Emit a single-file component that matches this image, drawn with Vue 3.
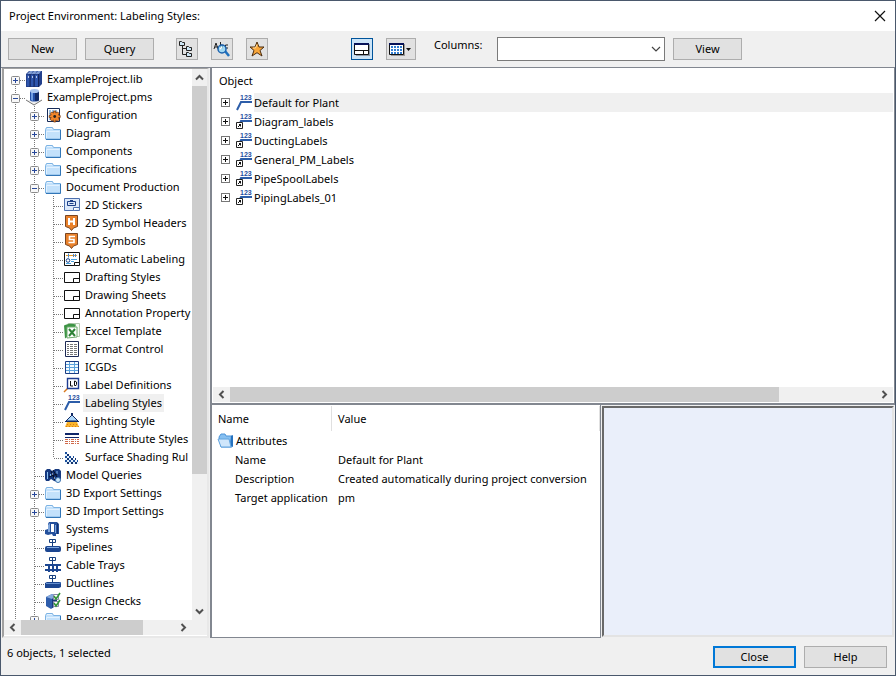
<script setup>
import { ref } from 'vue'

const treeRows = [
  { label: 'ExampleProject.lib', icon: 'lib', box: '+', guides: ['first'] },
  { label: 'ExampleProject.pms', icon: 'pms', box: '-', guides: ['tee'] },
  { label: 'Configuration', icon: 'config', box: '+', guides: ['line', 'tee'] },
  { label: 'Diagram', icon: 'folder', box: '+', guides: ['line', 'tee'] },
  { label: 'Components', icon: 'folder', box: '+', guides: ['line', 'tee'] },
  { label: 'Specifications', icon: 'folder', box: '+', guides: ['line', 'tee'] },
  { label: 'Document Production', icon: 'folder', box: '-', guides: ['line', 'tee'] },
  { label: '2D Stickers', icon: 'sticker', guides: ['line', 'line', 'tee'] },
  { label: '2D Symbol Headers', icon: 'shield-h', guides: ['line', 'line', 'tee'] },
  { label: '2D Symbols', icon: 'shield-s', guides: ['line', 'line', 'tee'] },
  { label: 'Automatic Labeling', icon: 'auto', guides: ['line', 'line', 'tee'] },
  { label: 'Drafting Styles', icon: 'sheet', guides: ['line', 'line', 'tee'] },
  { label: 'Drawing Sheets', icon: 'sheet', guides: ['line', 'line', 'tee'] },
  { label: 'Annotation Property', icon: 'sheet', guides: ['line', 'line', 'tee'] },
  { label: 'Excel Template', icon: 'excel', guides: ['line', 'line', 'tee'] },
  { label: 'Format Control', icon: 'format', guides: ['line', 'line', 'tee'] },
  { label: 'ICGDs', icon: 'grid', guides: ['line', 'line', 'tee'] },
  { label: 'Label Definitions', icon: 'labeldef', guides: ['line', 'line', 'tee'] },
  { label: 'Labeling Styles', icon: 'label', guides: ['line', 'line', 'tee'], selected: true },
  { label: 'Lighting Style', icon: 'light', guides: ['line', 'line', 'tee'] },
  { label: 'Line Attribute Styles', icon: 'lines', guides: ['line', 'line', 'tee'] },
  { label: 'Surface Shading Rul', icon: 'shading', guides: ['line', 'line', 'end'] },
  { label: 'Model Queries', icon: 'queries', guides: ['line', 'tee'] },
  { label: '3D Export Settings', icon: 'folder', box: '+', guides: ['line', 'tee'] },
  { label: '3D Import Settings', icon: 'folder', box: '+', guides: ['line', 'tee'] },
  { label: 'Systems', icon: 'systems', guides: ['line', 'tee'] },
  { label: 'Pipelines', icon: 'pipe', guides: ['line', 'tee'] },
  { label: 'Cable Trays', icon: 'tray', guides: ['line', 'tee'] },
  { label: 'Ductlines', icon: 'duct', guides: ['line', 'tee'] },
  { label: 'Design Checks', icon: 'checks', guides: ['line', 'tee'] },
  { label: 'Resources', icon: 'folder', box: '+', guides: ['line', 'tee'] }
]

const objects = [
  'Default for Plant',
  'Diagram_labels',
  'DuctingLabels',
  'General_PM_Labels',
  'PipeSpoolLabels',
  'PipingLabels_01'
]
const selected = ref(0)

const attributes = [
  ['Name', 'Default for Plant'],
  ['Description', 'Created automatically during project conversion'],
  ['Target application', 'pm']
]

const scroll = { treeY: 75, treeX: 79, listX: 85 }
const columns = ref('')
</script>

<template>
  <svg class="defs" aria-hidden="true">
    <symbol id="lib" viewBox="0 0 19 18">
      <path d="M1 4l3-3h13v13l-3 3H1z" fill="#23408c" />
      <path d="M2 4l3-3h3L6 4zM6 4l3-3h3l-2 3zM10 4l3-3h3l-2 3z" fill="#7f9bd2" />
      <path d="M2 5h3v11H2zM6 5h3v11H6zM10 5h3v11h-3z" fill="#2f56ad" />
      <path d="M5 4v13M9 4v13M13.500 4v13" stroke="#14265e" />
      <path d="M3 7h1M7 7h1M11 7h1" stroke="#b9c9ee" stroke-width="2" />
    </symbol>
    <symbol id="pms" viewBox="0 0 19 18">
      <path d="M1 12l8 5 8-5" fill="#eee" stroke="#777" />
      <path d="M5 3v9c0 2 9 2 9 0V3z" fill="#2450a8" />
      <path d="M10 3v10c2 0 4 0 4-1V3z" fill="#102a68" />
      <path d="M6 3v9l2 1V3z" fill="#6f9de2" />
      <ellipse cx="9.500" cy="3" rx="4.500" ry="2" fill="#a9c5ef" />
    </symbol>
    <symbol id="config" viewBox="0 0 19 18">
      <path d="M3.500 2.500h12v13h-12z" fill="#fff" stroke="#152a57" />
      <path d="M5 5h9M5 7h9M5 9h9M5 11h9M5 13h9" stroke="#3b82c4" stroke-dasharray="2 1" />
      <path d="M9.700 5h2v2l2-1 1.500 1.500-1 1.500 2 .5v2h-2l1 2-1.500 1.500-2-1v2h-2v-2l-2 1L6.200 13l1-1.500h-2v-2l2-.5-1-1.500L7.700 6l2 1z" fill="#f2872c" stroke="#6a3008" stroke-width=".7" />
      <circle cx="10.700" cy="10.500" r="1.400" fill="#222" />
    </symbol>
    <symbol id="folder" viewBox="0 0 19 18">
      <path d="M1.500 5.500l1-2h6l1 2h7v9.500h-15z" fill="#c3e1fb" stroke="#7db3e3" />
      <path d="M3 4.500h5" stroke="#e7f4ff" />
      <path d="M2.500 14V7.500h13" fill="none" stroke="#e2f1ff" />
      <path d="M2 15.500h14.500V6" fill="none" stroke="#3276b7" />
    </symbol>
    <symbol id="folder-open" viewBox="0 0 19 18">
      <path d="M2 5l2-3h4l1 2h6v11H4z" fill="#86bff0" stroke="#4d94d8" />
      <path d="M14 4l2-1v12l-3-2z" fill="#2471bf" />
      <path d="M1 7h11l2 8H4z" fill="#cfe6fb" stroke="#62a4df" />
    </symbol>
    <symbol id="sticker" viewBox="0 0 19 18">
      <path d="M1.500 2.500h15v12h-15z" fill="#dce9fa" stroke="#4d70ae" />
      <path d="M4.500 5.500h8v4h-8zM6.500 7.500h4" fill="none" stroke="#1b3e87" />
      <path d="M7 4.500h3" stroke="#1b3e87" />
      <path d="M10.500 14.500v-3h6" fill="#fff" stroke="#4d70ae" />
    </symbol>
    <symbol id="shield-h" viewBox="0 0 19 18">
      <path d="M2.500 1.500h12v11l-4 1.500-2 2.500-2-2.500-4-1.500z" fill="#e9812a" stroke="#7b4520" />
      <path d="M6 4v7M11 4v7M6 7.500h5" stroke="#fff" stroke-width="2" />
    </symbol>
    <symbol id="shield-s" viewBox="0 0 19 18">
      <path d="M2.500 1.500h12v11l-4 1.500-2 2.500-2-2.500-4-1.500z" fill="#e9812a" stroke="#7b4520" />
      <path d="M12 4.500H6.500v3H11v3H5.500" fill="none" stroke="#fff" stroke-width="1.600" />
    </symbol>
    <symbol id="auto" viewBox="0 0 19 18">
      <path d="M1.500 2.500h15v13h-15z" fill="#fff" stroke="#111" />
      <path d="M3 5.500h11" stroke="#e79a24" />
      <path d="M5.500 3.500v4M10.500 4v3M12.500 4v3" fill="none" stroke="#4a86c8" />
      <circle cx="5" cy="10.500" r="1.800" fill="none" stroke="#17458e" />
      <path d="M8 9.500h6M8 11.500h3M3 13.500h5" stroke="#47a1dc" />
      <path d="M11.500 15.500v-3h5" fill="#fff" stroke="#111" />
    </symbol>
    <symbol id="sheet" viewBox="0 0 19 18">
      <path d="M1.500 4.500h15v10h-15z" fill="#fff" stroke="#111" />
      <path d="M10.500 14.500v-4h6" fill="none" stroke="#111" />
    </symbol>
    <symbol id="excel" viewBox="0 0 19 18">
      <path d="M5 1.500h11.500v13H5z" fill="#f5fbf3" stroke="#b4c9b0" />
      <path d="M1 3.500c4-2 8-2 12-1l-1 3-6 1v7l-4 3z" fill="#3d9445" />
      <path d="M4 5h10v10l-10 1z" fill="#fff" stroke="#6fac6e" />
      <path d="M6 7l6 7M12 7l-6 7" stroke="#2d8136" stroke-width="2" />
    </symbol>
    <symbol id="format" viewBox="0 0 19 18">
      <path d="M2.500 1.500h13v15h-13z" fill="#fff" stroke="#1c2954" />
      <path d="M4 4.500h10M4 6.500h10M4 8.500h10M4 10.500h10M4 12.500h10M4 14.500h10" stroke="#777" stroke-dasharray="2 1 3 1 3" />
    </symbol>
    <symbol id="grid" viewBox="0 0 19 18">
      <path d="M3 4h13v12H3z" fill="#56657f" />
      <path d="M2.500 3.500h13v12h-13z" fill="#f4fbff" stroke="#1a3c83" />
      <path d="M3 6.500h12M3 9.500h12M3 12.500h12M6.500 4v11M11.500 4v11" stroke="#5ca2dc" />
    </symbol>
    <symbol id="labeldef" viewBox="0 0 19 18">
      <path d="M1 16l4-4" stroke="#d9781c" stroke-width="1.500" />
      <path d="M4.500 2.500h11v10h-11z" fill="#fff" stroke="#1d3c91" stroke-width="1.400" />
      <path d="M7.500 5v5H10M11.500 5v4.500H13l.5-1V6l-.5-.5z" fill="none" stroke="#111" />
    </symbol>
    <symbol id="label" viewBox="0 0 19 18">
      <path d="M17 8H6L2 16" fill="none" stroke="#2c5da9" stroke-width="2" />
    </symbol>
    <symbol id="label-link" viewBox="0 0 19 18">
      <path d="M17 8H6L4 12" fill="none" stroke="#2c5da9" stroke-width="2" />
      <path d="M1.500 9.500h6v6h-6z" fill="#fff" stroke="#222" />
      <path d="M3 14l3-3M4 11.500h1.500v2" fill="none" stroke="#111" />
    </symbol>
    <symbol id="light" viewBox="0 0 19 18">
      <path d="M9 1v2" stroke="#122b66" stroke-width="2" />
      <path d="M9 3l6 6H3z" fill="#aed7f8" stroke="#122b66" />
      <path d="M2 9.500h14" stroke="#122b66" />
      <path d="M4 10h10l2 5H2z" fill="#f9b42c" />
      <path d="M4 12.500h10M3 14.500h13" stroke="#db7c1a" stroke-dasharray="1 2" />
    </symbol>
    <symbol id="lines" viewBox="0 0 19 18">
      <path d="M2 4h14" stroke="#102669" stroke-width="2" />
      <path d="M2 7.500h14" stroke="#102669" />
      <path d="M2 9.500h14M2 11.500h14M2 13.500h14" stroke="#d0694a" stroke-dasharray="3 1 1 1" />
    </symbol>
    <symbol id="shading" viewBox="0 0 19 18">
      <path d="M2 4l15 12H2z" fill="#e5f2fb" />
      <path d="M2 5h4M2 9h9M2 13h13" stroke="#1a4f9e" stroke-width="2" stroke-dasharray="2 2" />
      <path d="M4 7h4M4 11h9M4 15h12" stroke="#12326f" stroke-width="2" stroke-dasharray="2 2" />
    </symbol>
    <symbol id="queries" viewBox="0 0 19 18">
      <path d="M1 5l2-2h3l2 2 2-1 1-1h4l2 2v8l-3 3-4-1-3-2-2 2H2l-1-2z" fill="#16397f" />
      <path d="M3.500 6v7M6.500 8v3M13 5v3" stroke="#8ec3f2" />
      <path d="M7 5l4 9M5 11l8-3M9 4l4 7" stroke="#050d22" />
      <path d="M8 8h1M10 12h1" stroke="#fff" />
      <circle cx="14" cy="14" r="2.500" fill="#cdeafd" stroke="#3b70ad" />
    </symbol>
    <symbol id="systems" viewBox="0 0 19 18">
      <path d="M5 2h8l2 2v10h-3v2H9l-1-2-4 1-3-1v-4l3-1V4z" fill="#24509c" />
      <path d="M7 4h3v8H7z" fill="#fff" />
      <path d="M4 5l2-2v9H4zM11 5h1v8h-1z" fill="#83a8dc" />
      <path d="M13.500 3v11" stroke="#14316e" />
    </symbol>
    <symbol id="pipe" viewBox="0 0 19 18">
      <path d="M5.500 1.500h6v3h-6zM8.500 2v6" fill="#fff" stroke="#17407f" />
      <rect x="1" y="8" width="16" height="6" rx="2" fill="#1c4691" />
      <path d="M3 9.500h12" stroke="#7ea8df" />
    </symbol>
    <symbol id="tray" viewBox="0 0 19 18">
      <path d="M5.500 1.500h6v3h-6zM8.500 2v6" fill="#fff" stroke="#17407f" />
      <path d="M1 9h16M1 14h16M5 8v8M9 8v8M13 8v8" stroke="#1c4691" stroke-width="2" />
    </symbol>
    <symbol id="duct" viewBox="0 0 19 18">
      <path d="M5.500 1.500h6v3h-6zM8.500 2v6" fill="#fff" stroke="#17407f" />
      <path d="M1 9l2-1h14v5l-2 1H1z" fill="#1c4691" />
      <path d="M2 9.500h13l2-1" fill="none" stroke="#6590cf" />
    </symbol>
    <symbol id="checks" viewBox="0 0 19 18">
      <path d="M2 5l6-3 5 2v9l-6 4-5-3z" fill="#2e5dab" />
      <path d="M2 5l6-3 5 2-5 3z" fill="#86a9dd" />
      <path d="M8 7v9l5-3V4z" fill="#163b7d" />
      <path d="M9.500 2.500h5v5h-5zM9.500 9.500h5v5h-5z" fill="#fff" stroke="#88a" />
      <path d="M10 4l2 3 4-6M10 11l2 3 4-6" fill="none" stroke="#319436" stroke-width="1.600" />
    </symbol>
  </svg>

  <main class="window">
    <header class="titlebar">
      <h1>Project Environment: Labeling Styles:</h1>
      <button class="close-x" aria-label="Close window">
        <svg width="12" height="12" viewBox="0 0 12 12"><path d="M1 1l10 10M11 1L1 11" stroke="#111" stroke-width="1.200" /></svg>
      </button>
    </header>

    <div class="toolbar">
      <div class="group actions">
        <button class="btn">New</button>
        <button class="btn">Query</button>
      </div>
      <div class="group tools">
        <button class="tool" aria-label="Tree view">
          <svg width="16" height="18" viewBox="0 0 16 18">
            <path d="M3.500 5v9.500H8M3.500 8.500H8" fill="none" stroke="#222" />
            <path d="M.5 1.500h2l1 1h2v3h-5zM7.500 6.500h2l1 1h2v3h-5zM7.500 12.500h2l1 1h2v3h-5z" fill="#cde6f5" stroke="#222" />
          </svg>
        </button>
        <button class="tool" aria-label="Find text">
          <svg width="18" height="18" viewBox="0 0 18 18">
            <path d="M1 9l2-6 2 6M2 7h3M7.500 2v6M7.500 5h2v3h-2M15 5h-2.500v3H15" fill="none" stroke="#222" />
            <path d="M12 11l4 5" stroke="#1d70be" stroke-width="2.500" />
            <circle cx="9" cy="9" r="4" fill="#8bd6f8" fill-opacity=".75" stroke="#1c62ae" stroke-width="1.500" />
            <path d="M7 9l2-2" stroke="#fff" stroke-width="1.500" />
          </svg>
        </button>
        <button class="tool" aria-label="Favorites">
          <svg width="16" height="16" viewBox="0 0 16 16"><path d="M8 1l2 5h5l-4 3.500 2 5.500-5-3.300L3 15l2-5.500L1 6h5z" fill="#f8a63a" stroke="#4b2d10" /><path d="M8 3.500L6.500 7H4" fill="none" stroke="#ffdc9c" /></svg>
        </button>
      </div>
      <div class="group views">
        <button class="tool active" aria-label="Split view" aria-pressed="true">
          <svg width="16" height="14" viewBox="0 0 16 14"><path d="M2 2h14v12H2z" fill="#8d99a8" /><path d="M.5 1.500h14v11H.5z" fill="#fff" stroke="#111" /><path d="M0 2h15" stroke="#071258" stroke-width="2" /><path d="M1 8.500h13M9.500 9v3" stroke="#111" /></svg>
        </button>
        <button class="tool wide" aria-label="Table view">
          <svg width="24" height="14" viewBox="0 0 24 14"><path d="M2 2h14v12H2z" fill="#999" /><path d="M.5 1.500h14v11H.5z" fill="#fff" stroke="#111" /><path d="M0 2h15" stroke="#071258" stroke-width="2" /><path d="M2 5h11M2 8h11M2 11h11" stroke="#327fd2" stroke-width="2" stroke-dasharray="2 1" /><path d="M17 6h5l-2.500 3z" fill="#111" /></svg>
        </button>
      </div>
      <label class="columns-label" for="columns">Columns:</label>
      <div class="combo">
        <select id="columns" v-model="columns"><option value=""></option></select>
        <svg width="10" height="6" viewBox="0 0 10 6"><path d="M1 1l4 4 4-4" fill="none" stroke="#444" stroke-width="1.200" /></svg>
      </div>
      <button class="btn">View</button>
    </div>

    <div class="workspace">
      <nav class="tree-pane" aria-label="Project tree">
        <div class="tree-row-area">
          <ul class="tree">
            <li v-for="(row, i) in treeRows" :key="i" class="tree-row">
              <span v-for="(g, n) in row.guides" :key="n" class="guide" :class="g">
                <svg v-if="row.box && n === row.guides.length - 1" class="box" width="9" height="9" viewBox="0 0 9 9">
                  <rect x=".5" y=".5" width="8" height="8" rx="1" fill="#f8f8f8" stroke="#8b8b8b" />
                  <path :d="row.box === '+' ? 'M2 4.500h5M4.500 2v5' : 'M2 4.500h5'" stroke="#28489a" />
                </svg>
              </span>
              <svg class="icon" width="19" height="18">
                <use :href="'#' + row.icon" />
                <text v-if="row.icon === 'label'" x="5" y="6" class="digits">123</text>
              </svg>
              <a href="#" class="tree-label" :class="{ selected: row.selected }" @click.prevent>{{ row.label }}</a>
            </li>
          </ul>
          <div class="scrollbar vertical">
            <button aria-label="Scroll up"><svg width="9" height="7" viewBox="0 0 9 7"><path d="M1 5.500l3.500-3.500L8 5.500" /></svg></button>
            <div class="track"><div class="thumb" :style="{ height: scroll.treeY + '%' }"></div></div>
            <button aria-label="Scroll down"><svg width="9" height="7" viewBox="0 0 9 7"><path d="M1 1.500l3.500 3.500L8 1.500" /></svg></button>
          </div>
        </div>
        <div class="scrollbar horizontal with-corner">
          <button aria-label="Scroll left"><svg width="7" height="9" viewBox="0 0 7 9"><path d="M5.500 1L2 4.500 5.500 8" /></svg></button>
          <div class="track"><div class="thumb" :style="{ width: scroll.treeX + '%' }"></div></div>
          <button aria-label="Scroll right"><svg width="7" height="9" viewBox="0 0 7 9"><path d="M1.500 1L5 4.500 1.500 8" /></svg></button>
        </div>
      </nav>

      <div class="content">
        <section class="objects">
          <h2>Object</h2>
          <ul>
            <li v-for="(name, i) in objects" :key="name" class="object" @click="selected = i">
              <svg class="box" width="9" height="9" viewBox="0 0 9 9">
                <rect x=".5" y=".5" width="8" height="8" fill="#fff" stroke="#777" />
                <path d="M2 4.500h5M4.500 2v5" stroke="#111" />
              </svg>
              <svg class="icon" width="19" height="18">
                <use :href="i ? '#label-link' : '#label'" />
                <text x="5" y="6" class="digits">123</text>
              </svg>
              <span class="object-name" :class="{ selected: i === selected }">{{ name }}</span>
            </li>
          </ul>
          <div class="scrollbar horizontal">
            <button aria-label="Scroll left"><svg width="7" height="9" viewBox="0 0 7 9"><path d="M5.500 1L2 4.500 5.500 8" /></svg></button>
            <div class="track"><div class="thumb" :style="{ width: scroll.listX + '%' }"></div></div>
            <button aria-label="Scroll right"><svg width="7" height="9" viewBox="0 0 7 9"><path d="M1.500 1L5 4.500 1.500 8" /></svg></button>
          </div>
        </section>

        <div class="lower">
          <section class="details">
            <table>
              <thead>
                <tr><th class="name-col">Name</th><th>Value</th></tr>
              </thead>
              <tbody>
                <tr>
                  <td colspan="2" class="category">
                    <span><svg class="icon" width="19" height="18"><use href="#folder-open" /></svg>Attributes</span>
                  </td>
                </tr>
                <tr v-for="[key, value] in attributes" :key="key">
                  <td class="key">{{ key }}</td>
                  <td>{{ value }}</td>
                </tr>
              </tbody>
            </table>
          </section>
          <section class="preview" aria-label="Preview"></section>
        </div>
      </div>
    </div>

    <footer>
      <p>6 objects, 1 selected</p>
      <button class="btn large default">Close</button>
      <button class="btn large">Help</button>
    </footer>
  </main>
</template>

<style>
body {
  margin: 0;
}
</style>

<style scoped>
.defs {
  position: absolute;
  width: 0;
  height: 0;
}
.digits {
  font: bold 7px 'Liberation Sans', sans-serif;
  fill: #1f4f9f;
}
.window {
  box-sizing: border-box;
  display: flex;
  flex-direction: column;
  height: 100vh;
  border: 1px solid #4a586c;
  background: #f0f0f0;
  color: #000;
  font-family: 'Noto Sans', 'Open Sans', sans-serif;
  font-size: 11px;
  line-height: 18px;
}
.window * {
  box-sizing: border-box;
}
.window svg {
  display: block;
  flex: none;
}
h1,
h2,
p,
ul {
  margin: 0;
  padding: 0;
  font-size: 11px;
  font-weight: 400;
  list-style: none;
}
button,
select {
  font: inherit;
  color: inherit;
  border-radius: 0;
}
.titlebar {
  display: flex;
  align-items: center;
  justify-content: space-between;
  height: 30px;
  padding: 0 9px 0 8px;
  background: #fff;
}
.close-x {
  padding: 0;
  border: 0;
  background: none;
}
.toolbar {
  display: flex;
  align-items: center;
  height: 36px;
  padding: 0 7px;
}
.group {
  display: flex;
  gap: 13px;
}
.actions {
  gap: 8px;
}
.tools {
  margin-left: 22px;
}
.views {
  margin: 0 18px 0 83px;
}
.btn {
  width: 69px;
  height: 22px;
  padding: 0;
  border: 1px solid #adadad;
  background: #e1e1e1;
  line-height: 18px;
}
.tool {
  display: flex;
  align-items: center;
  justify-content: center;
  width: 22px;
  height: 22px;
  padding: 0;
  border: 1px solid #adadad;
  background: #e1e1e1;
}
.tool.wide {
  width: 30px;
}
.tool.active {
  border-color: #00549b;
  background: #cce4f7;
}
.columns-label {
  width: 63px;
  padding-bottom: 8px;
}
.combo {
  display: grid;
  align-items: center;
  width: 168px;
  margin-right: 8px;
}
.combo > * {
  grid-area: 1 / 1;
}
.combo select {
  appearance: none;
  width: 100%;
  height: 24px;
  border: 1px solid #7a7a7a;
  background: #fff;
}
.combo svg {
  justify-self: end;
  margin-right: 4px;
  pointer-events: none;
}
.workspace {
  display: flex;
  flex: 1;
  min-height: 0;
  border-top: 1px solid #828790;
}
.tree-pane {
  display: flex;
  flex-direction: column;
  flex: 0 0 207px;
  min-width: 0;
  margin: 0 1px;
  padding-bottom: 1px;
  border: 2px solid #a0a0a0;
  border-top-width: 1px;
  border-right-color: #e8e8e8;
  border-bottom-color: #e8e8e8;
  background: #fff;
}
.tree-row-area {
  display: flex;
  flex: 1;
  min-height: 0;
}
.tree {
  flex: 1;
  min-width: 0;
  overflow: hidden;
  padding: 1px 0 0 2px;
}
.tree-row {
  display: flex;
  height: 18px;
  white-space: nowrap;
}
.guide {
  position: relative;
  flex: 0 0 19px;
}
.guide::before {
  content: '';
  position: absolute;
  top: 0;
  bottom: 0;
  left: 9px;
  width: 1px;
  background: repeating-linear-gradient(#777 0 1px, transparent 1px 2px);
}
.guide.first::before {
  top: 10px;
}
.guide.end::before {
  bottom: 8px;
}
.guide:not(.line)::after {
  content: '';
  position: absolute;
  top: 10px;
  left: 10px;
  width: 10px;
  height: 1px;
  background: repeating-linear-gradient(90deg, #777 0 1px, transparent 1px 2px);
}
.guide .box {
  position: absolute;
  top: 6px;
  left: 5px;
  z-index: 1;
}
.icon {
  position: relative;
}
.tree-label {
  margin-left: 1px;
  padding: 0 2px;
  color: inherit;
  text-decoration: none;
}
.selected {
  background: #f0f0f0;
}
.scrollbar {
  display: flex;
  background: #f0f0f0;
}
.scrollbar.vertical {
  flex: 0 0 15px;
  flex-direction: column;
}
.scrollbar.horizontal {
  flex: 0 0 15px;
}
.with-corner {
  padding-right: 15px;
}
.scrollbar button {
  display: flex;
  align-items: center;
  justify-content: center;
  flex: 0 0 17px;
  padding: 0;
  border: 0;
  background: none;
}
.scrollbar button path {
  fill: none;
  stroke: #505050;
  stroke-width: 2;
}
.track {
  flex: 1;
}
.thumb {
  width: 100%;
  height: 100%;
  background: #cdcdcd;
}
.content {
  display: grid;
  grid-template-rows: minmax(0, 337fr) minmax(0, 233fr);
  flex: 1;
  min-width: 0;
  border-left: 2px solid #828790;
}
.objects {
  display: flex;
  flex-direction: column;
  padding: 0 1px 1px;
  border-right: 1px solid #828790;
  border-bottom: 2px solid #828790;
  background: #fff;
}
h2 {
  padding: 4px 6px 3px;
}
.objects ul {
  flex: 1;
  min-height: 0;
}
.object {
  display: flex;
  align-items: center;
  height: 19px;
  padding-left: 8px;
}
.object .icon {
  margin-left: 5px;
}
.object-name {
  flex: 1;
  height: 19px;
  line-height: 19px;
}
.lower {
  display: grid;
  grid-template-columns: 57% minmax(0, 1fr);
}
.details {
  overflow: hidden;
  padding-top: 1px;
  border: solid #828790;
  border-width: 0 1px 1px 0;
  background: #fff;
}
table {
  width: 100%;
  table-layout: fixed;
  border-collapse: separate;
  border-spacing: 0;
}
th,
td {
  height: 19px;
  padding: 0 0 0 6px;
  font-weight: 400;
  text-align: left;
  white-space: nowrap;
}
th {
  height: 25px;
  border-right: 1px solid #e0e0e0;
}
.name-col {
  width: 120px;
}
td.category {
  padding-left: 5px;
}
.category span {
  display: flex;
}
td.key {
  padding-left: 23px;
}
.preview {
  margin: 1px 1px 1px 1px;
  border: 2px solid;
  border-color: #696969 #e3e3e3 #e3e3e3 #696969;
  background: #eaeffa;
}
footer {
  display: flex;
  align-items: flex-start;
  gap: 8px;
  padding: 8px 8px 7px 6px;
}
footer p {
  flex: 1;
  margin-top: -2px;
}
.btn.large {
  width: 83px;
}
.btn.default {
  border: 2px solid #0078d7;
}
</style>
